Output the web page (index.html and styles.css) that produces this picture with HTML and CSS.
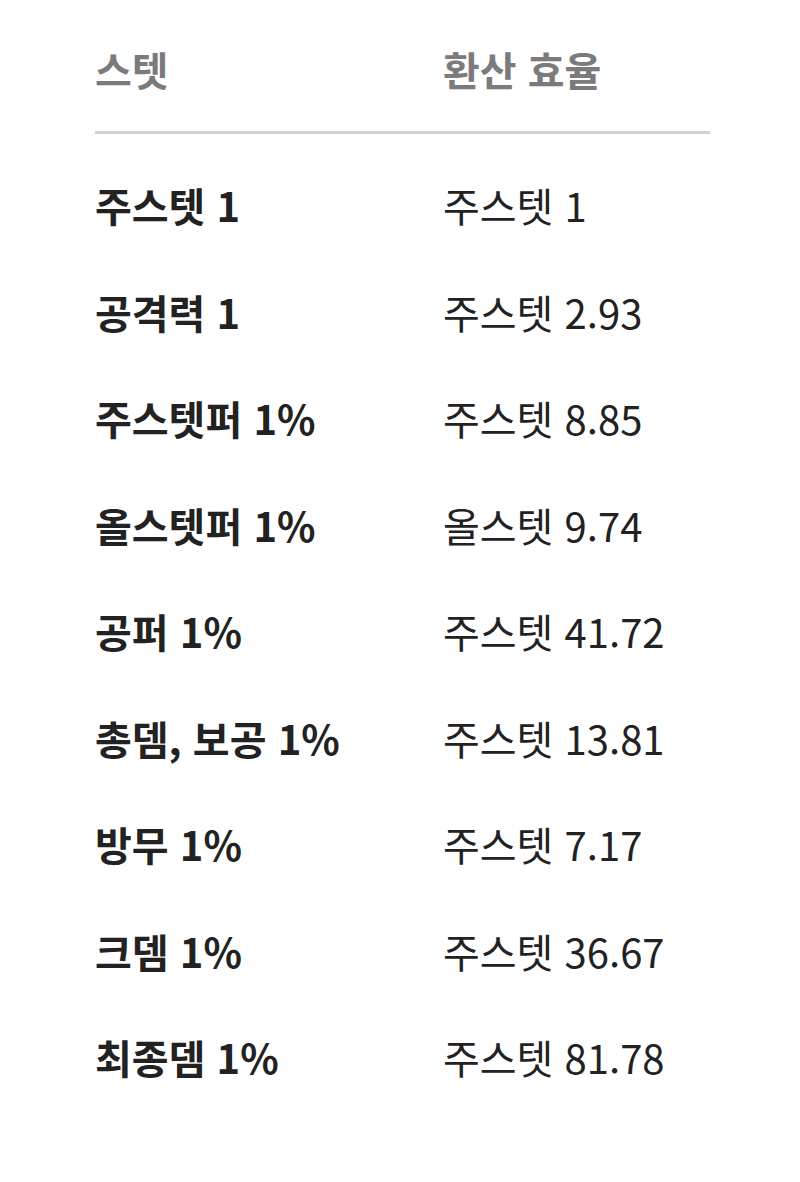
FILE: index.html
```html
<!DOCTYPE html>
<html lang="ko">
<head>
<meta charset="utf-8">
<link rel="stylesheet" href="styles.css">
</head>
<body>
<div class="table">
  <div class="head">
    <div>스텟</div>
    <div>환산 효율</div>
  </div>
  <div class="body">
    <div class="row"><div class="stat">주스텟 1</div><div>주스텟 1</div></div>
    <div class="row"><div class="stat">공격력 1</div><div>주스텟 2.93</div></div>
    <div class="row"><div class="stat">주스텟퍼 1%</div><div>주스텟 8.85</div></div>
    <div class="row"><div class="stat">올스텟퍼 1%</div><div>올스텟 9.74</div></div>
    <div class="row"><div class="stat">공퍼 1%</div><div>주스텟 41.72</div></div>
    <div class="row"><div class="stat">총뎀, 보공 1%</div><div>주스텟 13.81</div></div>
    <div class="row"><div class="stat">방무 1%</div><div>주스텟 7.17</div></div>
    <div class="row"><div class="stat">크뎀 1%</div><div>주스텟 36.67</div></div>
    <div class="row"><div class="stat">최종뎀 1%</div><div>주스텟 81.78</div></div>
  </div>
</div>
</body>
</html>
```

FILE: styles.css
```css
html, body {
  margin: 0;
  padding: 0;
  background: #fff;
}
body {
  font-family: "Noto Sans CJK KR", "Noto Sans", sans-serif;
  font-size: 40px;
  color: #222;
}
.table {
  margin-left: 95px;
  width: 615px;
  padding-top: 6px;
}
.head {
  display: grid;
  grid-template-columns: 348px 1fr;
  align-items: center;
  height: 125px;
  border-bottom: 3px solid #d2d2d2;
  color: #7b7b7b;
  font-weight: 700;
}
.body {
  padding-top: 18px;
}
.row {
  display: grid;
  grid-template-columns: 348px 1fr;
  align-items: center;
  height: 106.5px;
}
.row > div {
  line-height: 1;
}
.stat {
  font-weight: 700;
}
```
